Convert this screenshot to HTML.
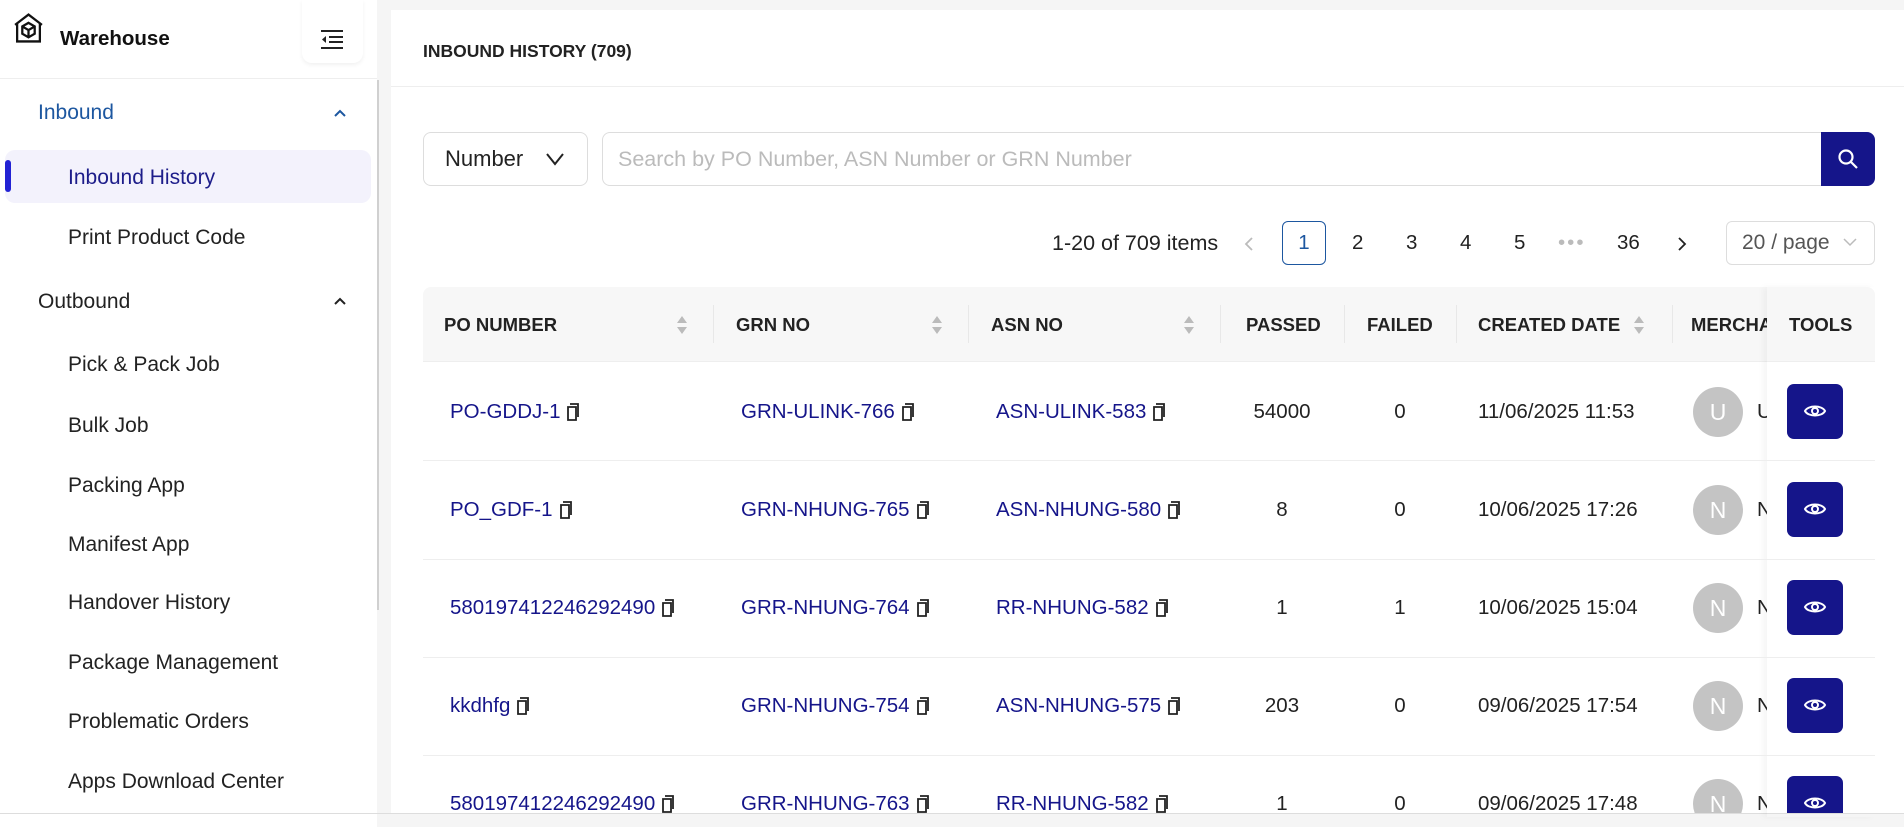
<!DOCTYPE html>
<html><head><meta charset="utf-8"><style>
*{box-sizing:border-box;margin:0;padding:0}
body{width:1904px;height:827px;overflow:hidden;background:#f5f5f5;font-family:"Liberation Sans",sans-serif;color:#222;position:relative}
.abs{position:absolute}
#side{left:0;top:0;width:377px;height:827px;background:#fff}
.si{position:absolute;left:68px;font-size:21px;color:#222;line-height:24px}
#main{left:391px;top:10px;width:1513px;height:803px;background:#fff}
.h{position:absolute;top:287px;height:75px;line-height:75px;font-size:18.5px;font-weight:bold;color:#222}
.sep{position:absolute;top:305px;width:1px;height:38px;background:#e8e8e8}
.sort{position:absolute;top:313px;width:12px;height:24px}
.c{position:absolute;font-size:20.5px;line-height:24px}
.lk{color:#15158a}
.cp{display:inline-block;vertical-align:-3px;margin-left:6px}
.av{position:absolute;width:50px;height:50px;border-radius:50%;background:#c4c4c4;color:#fff;font-size:23px;text-align:center;line-height:50px}
.eye{position:absolute;left:1787px;width:56px;height:55px;border-radius:7px;background:#15158a}
.pg{position:absolute;top:231px;font-size:20.5px;line-height:24px;color:#222}
</style></head><body>
<div id="side" class="abs">
 <svg class="abs" style="left:13px;top:12px" width="31" height="32" viewBox="0 0 30 30" fill="none" stroke="#111" stroke-width="2.2"><path d="M2 12 L15 2 L28 12 M4 10 V28 H26 V10"/><path d="M15 10 L21 13.5 V20.5 L15 24 L9 20.5 V13.5 Z M9 13.5 L15 17 L21 13.5 M15 17 V24"/></svg>
 <div class="abs" style="left:60px;top:27px;font-size:20.5px;font-weight:bold;color:#111">Warehouse</div>
 <div class="abs" style="left:302px;top:0;width:61px;height:63px;border-radius:0 0 10px 10px;box-shadow:0 2px 4px rgba(0,0,0,.06)"></div>
 <svg class="abs" style="left:321px;top:29px" width="22" height="20" viewBox="0 0 22 20" stroke="#222" stroke-width="2"><path d="M0 2H22M8 8H22M8 13H22M0 19H22"/><path d="M5 7 L1 10.5 L5 14Z" fill="#222" stroke="none"/></svg>
 <div class="abs" style="left:0;top:78px;width:377px;height:1px;background:#eee"></div>
 <div class="abs" style="left:377px;top:80px;width:2px;height:530px;background:#d0d0d0"></div>
 <div class="si" style="left:38px;top:101px;color:#1d57a0">Inbound</div>
 <svg class="abs" style="left:333px;top:108px" width="14" height="10" viewBox="0 0 14 10" fill="none" stroke="#1d57a0" stroke-width="2"><path d="M2 8L7 3L12 8"/></svg>
 <div class="abs" style="left:5px;top:150px;width:366px;height:53px;background:#f3f2fc;border-radius:10px"></div>
 <div class="abs" style="left:5px;top:160px;width:6px;height:32px;background:#2222d4;border-radius:3px"></div>
 <div class="si" style="top:166px;color:#1d1d8a">Inbound History</div>
 <div class="si" style="top:226px">Print Product Code</div>
 <div class="si" style="left:38px;top:290px">Outbound</div>
 <svg class="abs" style="left:333px;top:296px" width="14" height="10" viewBox="0 0 14 10" fill="none" stroke="#222" stroke-width="2"><path d="M2 8L7 3L12 8"/></svg>
 <div class="si" style="top:353px">Pick &amp; Pack Job</div>
 <div class="si" style="top:414px">Bulk Job</div>
 <div class="si" style="top:474px">Packing App</div>
 <div class="si" style="top:533px">Manifest App</div>
 <div class="si" style="top:591px">Handover History</div>
 <div class="si" style="top:651px">Package Management</div>
 <div class="si" style="top:710px">Problematic Orders</div>
 <div class="si" style="top:770px">Apps Download Center</div>
</div>
<div id="main" class="abs"></div>
<div class="abs" style="left:423px;top:41px;font-size:17.5px;font-weight:bold;color:#222">INBOUND HISTORY (709)</div>
<div class="abs" style="left:391px;top:86px;width:1513px;height:1px;background:#eee"></div>
<div class="abs" style="left:0;top:813px;width:1904px;height:1px;background:#ddd"></div>
<div class="abs" style="left:423px;top:132px;width:165px;height:54px;border:1px solid #ddd;border-radius:8px;font-size:22px;line-height:52px;padding-left:21px">Number</div>
<svg class="abs" style="left:545px;top:152px" width="20" height="14" viewBox="0 0 20 14" fill="none" stroke="#222" stroke-width="2"><path d="M2 2L10 12L18 2"/></svg>
<div class="abs" style="left:602px;top:132px;width:1230px;height:54px;border:1px solid #ddd;border-radius:8px 0 0 8px;font-size:21.5px;line-height:52px;padding-left:15px;color:#bbb">Search by PO Number, ASN Number or GRN Number</div>
<div class="abs" style="left:1821px;top:132px;width:54px;height:54px;background:#15158a;border-radius:0 8px 8px 0"></div>
<svg class="abs" style="left:1837px;top:148px" width="22" height="22" viewBox="0 0 22 22" fill="none" stroke="#fff" stroke-width="2.2"><circle cx="9" cy="9" r="6.5"/><path d="M14 14L20 20"/></svg>
<div class="pg" style="left:1052px;font-size:21.5px">1-20 of 709 items</div>
<svg class="abs" style="left:1244px;top:236px" width="10" height="16" viewBox="0 0 10 16" fill="none" stroke="#bbb" stroke-width="1.8"><path d="M8 2L2 8L8 14"/></svg>
<div class="abs" style="left:1282px;top:221px;width:44px;height:44px;border:1.5px solid #1d57a0;border-radius:6px;text-align:center;line-height:41px;font-size:20.5px;color:#1d57a0">1</div>
<div class="pg" style="left:1352px">2</div><div class="pg" style="left:1406px">3</div><div class="pg" style="left:1460px">4</div><div class="pg" style="left:1514px">5</div>
<div class="pg" style="left:1558px;color:#bbb;letter-spacing:2px">•••</div>
<div class="pg" style="left:1617px">36</div>
<svg class="abs" style="left:1677px;top:236px" width="10" height="16" viewBox="0 0 10 16" fill="none" stroke="#222" stroke-width="1.8"><path d="M2 2L8 8L2 14"/></svg>
<div class="abs" style="left:1726px;top:221px;width:149px;height:44px;border:1px solid #ddd;border-radius:6px;font-size:21px;line-height:42px;padding-left:15px;color:#555">20 / page</div>
<svg class="abs" style="left:1842px;top:237px" width="16" height="10" viewBox="0 0 16 10" fill="none" stroke="#bbb" stroke-width="1.5"><path d="M2 2L8 8L14 2"/></svg>

<div class="abs" style="left:423px;top:287px;width:1452px;height:75px;background:#f7f7f7;border-radius:8px 8px 0 0;border-bottom:1px solid #eee"></div>
<div class="abs" style="left:1767px;top:287px;width:108px;height:530px;box-shadow:-4px 0 6px rgba(0,0,0,.04)"></div>
<div class="h" style="left:444px">PO NUMBER</div>
<div class="h" style="left:736px">GRN NO</div>
<div class="h" style="left:991px">ASN NO</div>
<div class="h" style="left:1246px">PASSED</div>
<div class="h" style="left:1367px">FAILED</div>
<div class="h" style="left:1478px">CREATED DATE</div>
<div class="h" style="left:1691px;width:76px;overflow:hidden;white-space:nowrap">MERCHANT</div>
<div class="h" style="left:1789px">TOOLS</div>
<div class="sep" style="left:713px"></div><div class="sep" style="left:968px"></div><div class="sep" style="left:1220px"></div><div class="sep" style="left:1344px"></div><div class="sep" style="left:1456px"></div><div class="sep" style="left:1672px"></div>
<svg class="sort" style="left:676px" viewBox="0 0 12 24"><path d="M6 3L11 10H1Z M6 21L11 14H1Z" fill="#bbb"/></svg>
<svg class="sort" style="left:931px" viewBox="0 0 12 24"><path d="M6 3L11 10H1Z M6 21L11 14H1Z" fill="#bbb"/></svg>
<svg class="sort" style="left:1183px" viewBox="0 0 12 24"><path d="M6 3L11 10H1Z M6 21L11 14H1Z" fill="#bbb"/></svg>
<svg class="sort" style="left:1633px" viewBox="0 0 12 24"><path d="M6 3L11 10H1Z M6 21L11 14H1Z" fill="#bbb"/></svg>

<div class="abs" style="left:423px;top:460px;width:1452px;height:1px;background:#eee"></div>
<div class="abs" style="left:423px;top:559px;width:1452px;height:1px;background:#eee"></div>
<div class="abs" style="left:423px;top:657px;width:1452px;height:1px;background:#eee"></div>
<div class="abs" style="left:423px;top:755px;width:1452px;height:1px;background:#eee"></div>

<svg width="0" height="0" style="position:absolute"><defs><symbol id="cp" viewBox="0 0 14 18"><path d="M4 1H12V14M2 4H10V17H2Z" fill="none" stroke="#222" stroke-width="1.8"/></symbol><symbol id="ey" viewBox="0 0 24 24"><path d="M2 12C5 6 19 6 22 12C19 18 5 18 2 12Z" fill="none" stroke="#fff" stroke-width="2"/><circle cx="12" cy="12" r="3" fill="none" stroke="#fff" stroke-width="2"/></symbol></defs></svg>

<div class="c lk" style="left:450px;top:400px">PO-GDDJ-1<svg class="cp" width="14" height="18"><use href="#cp"/></svg></div>
<div class="c lk" style="left:741px;top:400px">GRN-ULINK-766<svg class="cp" width="14" height="18"><use href="#cp"/></svg></div>
<div class="c lk" style="left:996px;top:400px">ASN-ULINK-583<svg class="cp" width="14" height="18"><use href="#cp"/></svg></div>
<div class="c" style="left:1220px;width:124px;text-align:center;top:400px">54000</div>
<div class="c" style="left:1344px;width:112px;text-align:center;top:400px">0</div>
<div class="c" style="left:1478px;top:400px">11/06/2025 11:53</div>
<div class="av" style="left:1693px;top:387px">U</div><div class="c" style="left:1757px;top:400px;width:10px;overflow:hidden">U</div>
<div class="eye" style="top:384px"><svg width="24" height="24" style="margin:15px 16px"><use href="#ey"/></svg></div>

<div class="c lk" style="left:450px;top:498px">PO_GDF-1<svg class="cp" width="14" height="18"><use href="#cp"/></svg></div>
<div class="c lk" style="left:741px;top:498px">GRN-NHUNG-765<svg class="cp" width="14" height="18"><use href="#cp"/></svg></div>
<div class="c lk" style="left:996px;top:498px">ASN-NHUNG-580<svg class="cp" width="14" height="18"><use href="#cp"/></svg></div>
<div class="c" style="left:1220px;width:124px;text-align:center;top:498px">8</div>
<div class="c" style="left:1344px;width:112px;text-align:center;top:498px">0</div>
<div class="c" style="left:1478px;top:498px">10/06/2025 17:26</div>
<div class="av" style="left:1693px;top:485px">N</div><div class="c" style="left:1757px;top:498px;width:10px;overflow:hidden">N</div>
<div class="eye" style="top:482px"><svg width="24" height="24" style="margin:15px 16px"><use href="#ey"/></svg></div>

<div class="c lk" style="left:450px;top:596px">580197412246292490<svg class="cp" width="14" height="18"><use href="#cp"/></svg></div>
<div class="c lk" style="left:741px;top:596px">GRR-NHUNG-764<svg class="cp" width="14" height="18"><use href="#cp"/></svg></div>
<div class="c lk" style="left:996px;top:596px">RR-NHUNG-582<svg class="cp" width="14" height="18"><use href="#cp"/></svg></div>
<div class="c" style="left:1220px;width:124px;text-align:center;top:596px">1</div>
<div class="c" style="left:1344px;width:112px;text-align:center;top:596px">1</div>
<div class="c" style="left:1478px;top:596px">10/06/2025 15:04</div>
<div class="av" style="left:1693px;top:583px">N</div><div class="c" style="left:1757px;top:596px;width:10px;overflow:hidden">N</div>
<div class="eye" style="top:580px"><svg width="24" height="24" style="margin:15px 16px"><use href="#ey"/></svg></div>

<div class="c lk" style="left:450px;top:694px">kkdhfg<svg class="cp" width="14" height="18"><use href="#cp"/></svg></div>
<div class="c lk" style="left:741px;top:694px">GRN-NHUNG-754<svg class="cp" width="14" height="18"><use href="#cp"/></svg></div>
<div class="c lk" style="left:996px;top:694px">ASN-NHUNG-575<svg class="cp" width="14" height="18"><use href="#cp"/></svg></div>
<div class="c" style="left:1220px;width:124px;text-align:center;top:694px">203</div>
<div class="c" style="left:1344px;width:112px;text-align:center;top:694px">0</div>
<div class="c" style="left:1478px;top:694px">09/06/2025 17:54</div>
<div class="av" style="left:1693px;top:681px">N</div><div class="c" style="left:1757px;top:694px;width:10px;overflow:hidden">N</div>
<div class="eye" style="top:678px"><svg width="24" height="24" style="margin:15px 16px"><use href="#ey"/></svg></div>

<div class="abs" style="left:391px;top:755px;width:1513px;height:58px;overflow:hidden">
<div class="c lk" style="left:59px;top:37px">580197412246292490<svg class="cp" width="14" height="18"><use href="#cp"/></svg></div>
<div class="c lk" style="left:350px;top:37px">GRR-NHUNG-763<svg class="cp" width="14" height="18"><use href="#cp"/></svg></div>
<div class="c lk" style="left:605px;top:37px">RR-NHUNG-582<svg class="cp" width="14" height="18"><use href="#cp"/></svg></div>
<div class="c" style="left:829px;width:124px;text-align:center;top:37px">1</div>
<div class="c" style="left:953px;width:112px;text-align:center;top:37px">0</div>
<div class="c" style="left:1087px;top:37px">09/06/2025 17:48</div>
<div class="av" style="left:1302px;top:24px">N</div><div class="c" style="left:1366px;top:37px;width:10px;overflow:hidden">N</div>
<div class="eye" style="left:1396px;top:21px"><svg width="24" height="24" style="margin:15px 16px"><use href="#ey"/></svg></div>
</div>
</body></html>
